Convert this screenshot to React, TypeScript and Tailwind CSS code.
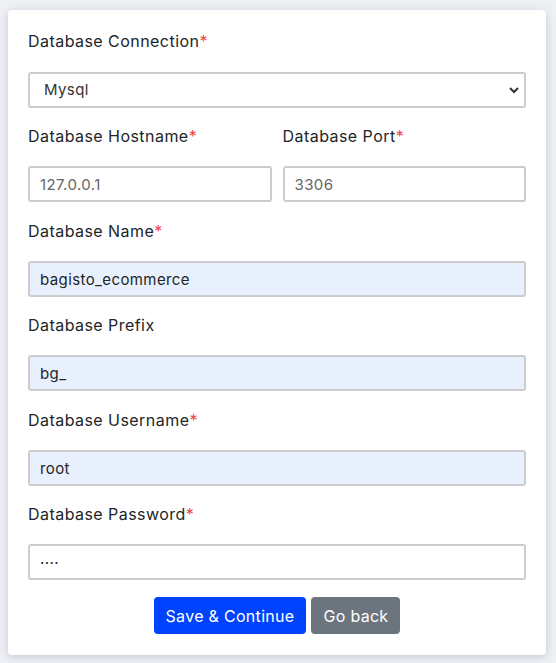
import React from "react";

function Label({ text, required }: { text: string; required?: boolean }) {
  return (
    <div className="h-[20px] flex items-center text-[16px] leading-[20px] tracking-[0.45px] text-[#212529]">
      {text}
      {required && <span className="text-[#ef4444]">*</span>}
    </div>
  );
}

const inputBase =
  "w-full h-[36px] border-2 border-[#cccccc] rounded-[3px] px-[10px] text-[15px] tracking-[0.4px] outline-none";

export default function App() {
  return (
    <div
      className="min-h-[663px] bg-[#eef0f4] px-[8px] pt-[10px] pb-[8px]"
      style={{ fontFamily: "Inter, 'Open Sans', sans-serif" }}
    >
      <div className="bg-white rounded-[4px] shadow-[0_2px_8px_rgba(120,130,160,0.35)] px-[20px] pt-[21px] pb-[21px] w-[538px]">
        <Label text="Database Connection" required />
        <div className="mt-[21px] relative">
          <select className={`${inputBase} appearance-none bg-white text-[#333] pl-[14px]`} defaultValue="mysql">
            <option value="mysql">Mysql</option>
          </select>
          <svg className="absolute right-[6px] top-[13px] pointer-events-none" width="12" height="10" viewBox="0 0 12 10">
            <path d="M2 3 L6 7 L10 3" fill="none" stroke="#333" strokeWidth="2" />
          </svg>
        </div>
        <div className="mt-[18px] grid grid-cols-2 gap-[11px]">
          <div>
            <Label text="Database Hostname" required />
            <input className={`${inputBase} mt-[20px] text-[#666]`} defaultValue="127.0.0.1" />
          </div>
          <div>
            <Label text="Database Port" required />
            <input className={`${inputBase} mt-[20px] text-[#666]`} defaultValue="3306" />
          </div>
        </div>
        <div className="mt-[19px]">
          <Label text="Database Name" required />
          <input className={`${inputBase} mt-[20px] bg-[#e8f0fe] text-[#212529]`} defaultValue="bagisto_ecommerce" />
        </div>
        <div className="mt-[18px]">
          <Label text="Database Prefix" />
          <input className={`${inputBase} mt-[20px] bg-[#e8f0fe] text-[#212529]`} defaultValue="bg_" />
        </div>
        <div className="mt-[19px]">
          <Label text="Database Username" required />
          <input className={`${inputBase} mt-[20px] bg-[#e8f0fe] text-[#212529]`} defaultValue="root" />
        </div>
        <div className="mt-[18px]">
          <Label text="Database Password" required />
          <input type="text" className={`${inputBase} mt-[20px] bg-white text-[#212529]`} defaultValue="····" />
        </div>
        <div className="mt-[17px] flex justify-center gap-[5px]">
          <button className="h-[37px] px-[12px] rounded-[4px] bg-[#0043ff] text-white text-[16px] tracking-[0.3px]">
            Save &amp; Continue
          </button>
          <button className="h-[37px] px-[12px] rounded-[4px] bg-[#6c757d] text-white text-[16px] tracking-[0.3px]">
            Go back
          </button>
        </div>
      </div>
    </div>
  );
}
